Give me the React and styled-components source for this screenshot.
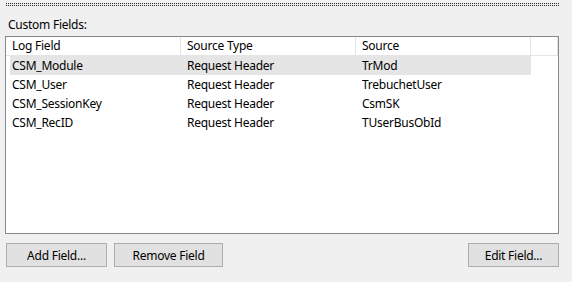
import React from "react";
import styled, { createGlobalStyle } from "styled-components";

const fields = [
  { log: "CSM_Module", type: "Request Header", source: "TrMod" },
  { log: "CSM_User", type: "Request Header", source: "TrebuchetUser" },
  { log: "CSM_SessionKey", type: "Request Header", source: "CsmSK" },
  { log: "CSM_RecID", type: "Request Header", source: "TUserBusObId" },
];

const columns = ["Log Field", "Source Type", "Source"];

const GlobalStyle = createGlobalStyle`
  body {
    margin: 0;
    background: #f0f0f0;
    font-family: "Noto Sans", "Open Sans", sans-serif;
    font-size: 12px;
    letter-spacing: -0.25px;
    color: #000;
  }
`;

const Panel = styled.div`
  width: 572px;
  height: 282px;
  padding: 3px 13px 0 5px;
  box-sizing: border-box;
  display: flex;
  flex-direction: column;
`;

const Dots = styled.div`
  margin-left: 1px;
  height: 3px;
  background-image: linear-gradient(90deg, #222 50%, transparent 50%),
    linear-gradient(90deg, #222 50%, transparent 50%);
  background-size: 2px 1px, 2px 1px;
  background-position: 0 0, 0 2px;
  background-repeat: repeat-x;
`;

const Label = styled.div`
  margin: 7px 0 0 3px;
  height: 23px;
  line-height: 23px;
`;

const List = styled.div`
  height: 198px;
  border: 1px solid #828790;
  background: #fff;
  box-sizing: border-box;
`;

const Grid = styled.div`
  display: grid;
  grid-template-columns: 175px 175px 175px 1fr;
`;

const HeaderCell = styled.div`
  height: 18px;
  line-height: 18px;
  padding-left: 6px;
  border-right: 1px solid #e5e5e5;
  border-bottom: 1px solid #e5e5e5;
  &:last-child {
    border-right: none;
  }
`;

const Cell = styled.div`
  height: 19px;
  line-height: 19px;
  padding-left: ${(p) => (p.$first ? "2px" : "6px")};
  margin-left: ${(p) => (p.$first ? "4px" : "0")};
  background: ${(p) => (p.$hot ? "#e5e5e5" : "transparent")};
  white-space: nowrap;
`;

const Buttons = styled.div`
  display: flex;
  gap: 7px;
  margin: 9px 0 0 1px;
`;

const Button = styled.button`
  width: ${(p) => p.$w}px;
  height: 24px;
  background: #e1e1e1;
  border: 1px solid #adadad;
  border-radius: 0;
  font: inherit;
  letter-spacing: inherit;
  color: #000;
  padding: 0;
  margin-left: ${(p) => (p.$push ? "auto" : "0")};
`;

export default function App() {
  return (
    <>
      <GlobalStyle />
      <Panel>
        <Dots />
        <Label>Custom Fields:</Label>
        <List>
          <Grid>
            {columns.map((c) => (
              <HeaderCell key={c}>{c}</HeaderCell>
            ))}
            <HeaderCell />
            {fields.map((f, i) => (
              <React.Fragment key={f.log}>
                <Cell $first $hot={i === 0}>{f.log}</Cell>
                <Cell $hot={i === 0}>{f.type}</Cell>
                <Cell $hot={i === 0}>{f.source}</Cell>
                <Cell />
              </React.Fragment>
            ))}
          </Grid>
        </List>
        <Buttons>
          <Button $w={101}>Add Field...</Button>
          <Button $w={109}>Remove Field</Button>
          <Button $w={91} $push>Edit Field...</Button>
        </Buttons>
      </Panel>
    </>
  );
}
